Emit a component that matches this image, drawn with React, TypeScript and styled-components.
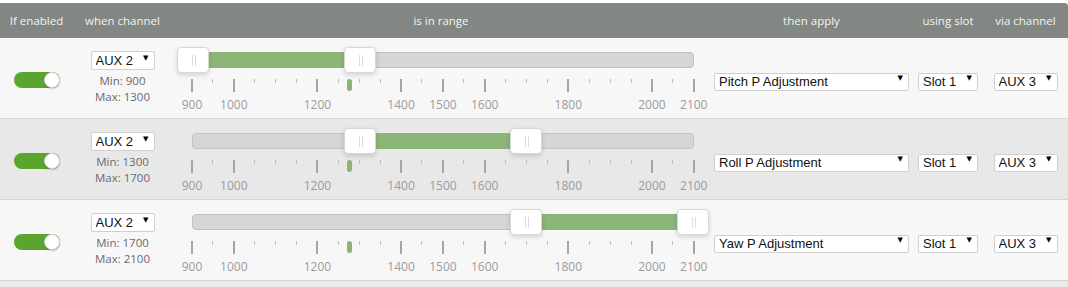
import React from 'react';
import styled, { createGlobalStyle } from 'styled-components';

const GlobalStyle = createGlobalStyle`
  html, body {
    margin: 0;
    padding: 0;
    background: #fff;
  }
  body {
    font-family: 'Open Sans', 'Liberation Sans', sans-serif;
  }
`;

const COLUMNS = '73px 99px 538px 203px 70px 85px';
const RANGE_MIN = 900;
const RANGE_MAX = 2100;
const STEP = 50;
const LABELLED = [900, 1000, 1200, 1400, 1500, 1600, 1800, 2000, 2100];
const CHANNEL_VALUE = 1275;

interface Adjustment {
  enabled: boolean;
  channel: string;
  min: number;
  max: number;
  func: string;
  slot: string;
  via: string;
}

const adjustments: Adjustment[] = [
  { enabled: true, channel: 'AUX 2', min: 900, max: 1300, func: 'Pitch P Adjustment', slot: 'Slot 1', via: 'AUX 3' },
  { enabled: true, channel: 'AUX 2', min: 1300, max: 1700, func: 'Roll P Adjustment', slot: 'Slot 1', via: 'AUX 3' },
  { enabled: true, channel: 'AUX 2', min: 1700, max: 2100, func: 'Yaw P Adjustment', slot: 'Slot 1', via: 'AUX 3' },
];

const pct = (v: number) => ((v - RANGE_MIN) * 100) / (RANGE_MAX - RANGE_MIN);

const Table = styled.div`
  margin-top: 3px;
  min-height: calc(100vh - 3px);
  background: #ebebeb;
`;

const Header = styled.div`
  display: grid;
  grid-template-columns: ${COLUMNS};
  align-items: center;
  height: 35px;
  background: #828783;
  color: #f3f3f3;
  font-size: 11.5px;
  border-radius: 0 4px 0 0;
`;

const HeaderCell = styled.div`
  text-align: center;
  white-space: nowrap;
`;

const Row = styled.div<{ $alt: boolean }>`
  display: grid;
  grid-template-columns: ${COLUMNS};
  min-height: 80px;
  border-bottom: 1px solid #d6d6d6;
  background: ${(p) => (p.$alt ? '#e8e8e8' : '#f7f7f7')};
`;

const Cell = styled.div`
  display: flex;
  justify-content: center;
  align-items: center;
`;

const ChannelCell = styled.div`
  display: flex;
  flex-direction: column;
  align-items: center;
  padding-top: 10px;
`;

const Limits = styled.div`
  margin-top: 6px;
  font-size: 11.5px;
  line-height: 16px;
  color: #6a6a6a;
  text-align: center;
`;

const Toggle = styled.span<{ $on: boolean }>`
  display: inline-flex;
  justify-content: ${(p) => (p.$on ? 'flex-end' : 'flex-start')};
  align-items: center;
  width: 46px;
  height: 16px;
  margin-top: 3px;
  border-radius: 8px;
  background: ${(p) => (p.$on ? '#5aa52d' : '#ccc')};
`;

const Knob = styled.span`
  width: 16px;
  height: 16px;
  box-sizing: border-box;
  border-radius: 50%;
  background: #fff;
  border: 1px solid #d8d8d8;
  box-shadow: 0 1px 2px rgba(0, 0, 0, 0.2);
`;

const SelectWrap = styled.span<{ $width: number; $height: number }>`
  position: relative;
  display: inline-block;
  width: ${(p) => p.$width}px;
  height: ${(p) => p.$height}px;
`;

const NativeSelect = styled.select`
  appearance: none;
  width: 100%;
  height: 100%;
  box-sizing: border-box;
  margin: 0;
  padding: 0 14px 0 4px;
  border: 1px solid #cfcfcf;
  border-radius: 2px;
  background: #fff;
  color: #111;
  font: 13px 'Liberation Sans', Arial, sans-serif;
  outline: none;
`;

const Arrow = styled.span`
  position: absolute;
  right: 6px;
  top: 50%;
  transform: translateY(-50%);
  font: 7px 'DejaVu Sans', sans-serif;
  color: #000;
  pointer-events: none;
`;

const RangeCell = styled.div`
  padding: 14px 16px 0 20px;
`;

const Track = styled.div`
  position: relative;
  height: 16px;
  box-sizing: border-box;
  border: 1px solid #c2c2c2;
  border-radius: 4px;
  background: #d6d6d6;
`;

const Fill = styled.div`
  position: absolute;
  top: -1px;
  bottom: -1px;
  background: #8cb677;
`;

const Handle = styled.div`
  position: absolute;
  top: 50%;
  width: 32px;
  height: 26px;
  margin: -13px 0 0 -16px;
  box-sizing: border-box;
  background: #fff;
  border: 1px solid #d8d8d8;
  border-radius: 4px;
  box-shadow: 0 2px 5px rgba(0, 0, 0, 0.15);

  &::before,
  &::after {
    content: '';
    position: absolute;
    top: 7px;
    left: 14px;
    width: 1px;
    height: 11px;
    background: #dcdcdc;
  }

  &::after {
    left: 17px;
  }
`;

const Scale = styled.div`
  position: relative;
  display: flex;
  justify-content: space-between;
  margin-top: 11px;
`;

const Pip = styled.div`
  width: 0;
  display: flex;
  flex-direction: column;
  align-items: center;
`;

const Tick = styled.div<{ $major: boolean }>`
  flex-shrink: 0;
  width: ${(p) => (p.$major ? 2 : 1)}px;
  height: ${(p) => (p.$major ? 13 : 4)}px;
  background: ${(p) => (p.$major ? '#a6a6a6' : '#bdbdbd')};
`;

const PipLabel = styled.div`
  margin-top: 6px;
  font-size: 12px;
  line-height: 14px;
  color: #9b9b9b;
  white-space: nowrap;
`;

const Marker = styled.div`
  position: absolute;
  top: 0;
  width: 5px;
  height: 12px;
  margin-left: -2px;
  border-radius: 3px;
  background: #8bb573;
`;

const Select = ({ value, width, height }: { value: string; width: number; height: number }) => (
  <SelectWrap $width={width} $height={height}>
    <NativeSelect defaultValue={value}>
      <option>{value}</option>
    </NativeSelect>
    <Arrow>▼</Arrow>
  </SelectWrap>
);

const pips: number[] = [];
for (let v = RANGE_MIN; v <= RANGE_MAX; v += STEP) pips.push(v);

const RangeSlider = ({ min, max }: { min: number; max: number }) => (
  <RangeCell>
    <Track>
      <Fill style={{ left: `${pct(min)}%`, width: `${pct(max) - pct(min)}%` }} />
      <Handle style={{ left: `${pct(min)}%` }} />
      <Handle style={{ left: `${pct(max)}%` }} />
    </Track>
    <Scale>
      {pips.map((v) => {
        const major = LABELLED.includes(v);
        return (
          <Pip key={v}>
            <Tick $major={major} />
            {major && <PipLabel>{v}</PipLabel>}
          </Pip>
        );
      })}
      <Marker style={{ left: `${pct(CHANNEL_VALUE)}%` }} />
    </Scale>
  </RangeCell>
);

export default function App() {
  return (
    <>
      <GlobalStyle />
      <Table>
        <Header>
          <HeaderCell>If enabled</HeaderCell>
          <HeaderCell>when channel</HeaderCell>
          <HeaderCell>is in range</HeaderCell>
          <HeaderCell>then apply</HeaderCell>
          <HeaderCell>using slot</HeaderCell>
          <HeaderCell>via channel</HeaderCell>
        </Header>
        {adjustments.map((a, i) => (
          <Row key={i} $alt={i % 2 === 1}>
            <Cell>
              <Toggle $on={a.enabled}>
                <Knob />
              </Toggle>
            </Cell>
            <ChannelCell>
              <Select value={a.channel} width={64} height={19} />
              <Limits>
                <div>Min: {a.min}</div>
                <div>Max: {a.max}</div>
              </Limits>
            </ChannelCell>
            <RangeSlider min={a.min} max={a.max} />
            <Cell>
              <Select value={a.func} width={195} height={18} />
            </Cell>
            <Cell>
              <Select value={a.slot} width={60} height={18} />
            </Cell>
            <Cell>
              <Select value={a.via} width={64} height={18} />
            </Cell>
          </Row>
        ))}
      </Table>
    </>
  );
}
